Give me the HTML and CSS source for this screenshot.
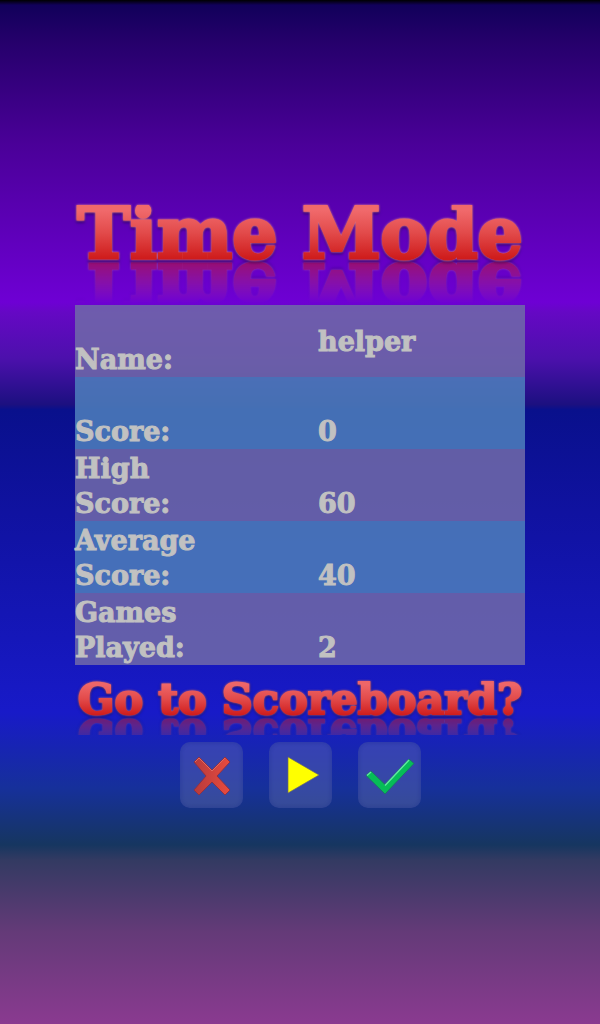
FILE: index.html
```html
<!DOCTYPE html>
<html lang="en">
<head>
  <meta charset="UTF-8" />
  <meta name="viewport" content="width=device-width, initial-scale=1" />
  <title>Time Mode</title>
  <link rel="stylesheet" href="styles.css">
</head>
<body>
  <main class="results">
    <h1 class="title">Time Mode</h1>

    <table class="stats">
      <tr>
        <th scope="row">Name:</th>
        <td class="player">helper</td>
      </tr>
      <tr>
        <th scope="row">Score:</th>
        <td>0</td>
      </tr>
      <tr>
        <th scope="row">High<br>Score:</th>
        <td>60</td>
      </tr>
      <tr>
        <th scope="row">Average<br>Score:</th>
        <td>40</td>
      </tr>
      <tr>
        <th scope="row">Games<br>Played:</th>
        <td>2</td>
      </tr>
    </table>

    <h2 class="question">Go to Scoreboard?</h2>

    <div class="actions">
      <button type="button" aria-label="No">
        <svg viewBox="0 0 63 66">
          <defs>
            <linearGradient id="red" x1="0" y1="0" x2="1" y2="0">
              <stop offset="0" stop-color="#b73a3c" />
              <stop offset="1" stop-color="#e84b3e" />
            </linearGradient>
          </defs>
          <path d="M14 20 L19 15 L32 28 L45 15 L50 20 L37 34 L50 48 L45 53 L32 40 L19 53 L14 48 L26 34 Z" fill="url(#red)" stroke="#8b3248" stroke-width="1" />
          <path d="M15 20 L19 16 L32 29 L45 16" fill="none" stroke="#e06a60" stroke-width="1" />
        </svg>
      </button>
      <button type="button" aria-label="Play again">
        <svg viewBox="0 0 63 66">
          <path d="M19 15 L50 33 L19 51 Z" fill="#ffff00" stroke="#6d6c62" stroke-width="0.7" />
        </svg>
      </button>
      <button type="button" aria-label="Yes">
        <svg viewBox="0 0 63 66">
          <path d="M8 33.5 L13 29 L27 42.5 L51 17 L56 21.5 L27 52 Z" fill="#06bd58" stroke="#1c7468" stroke-width="1" />
          <path d="M9 33.5 L13 30 M27 43.5 L51 18" fill="none" stroke="#5fe5a0" stroke-width="1.5" />
        </svg>
      </button>
    </div>
  </main>
</body>
</html>
```

FILE: styles.css
```css
:root {
  --row-purple: rgba(111, 105, 169, 0.87);
  --row-blue: rgba(77, 125, 187, 0.87);
  --text: #c1c1c1;
}

body {
  margin: 0;
  min-height: 100vh;
  font-family: 'Cooper Black', 'DejaVu Serif', serif;
  font-weight: 700;
  color: var(--text);
  background: linear-gradient(
    #000 0%,
    #11005a 0.5%,
    #25006b 4%,
    #4a0098 14%,
    #6e00d4 29.5%,
    #6508c4 30.5%,
    #4c10ac 35%,
    #1c1080 39.5%,
    #09108c 40%,
    #1012a0 50%,
    #181ac8 69.5%,
    #16309a 77%,
    #163660 82.5%,
    #333a62 84%,
    #643a78 91%,
    #8a3a90 100%
  );
}

.results {
  width: 75%;
  margin: 0 auto;
  padding: 205px 0 40px;
}

/* Glossy red headings with a mirror image below.
   The stroke is transparent so the gradient fills the fattened letters. */
.title,
.question {
  font-family: Ravie, 'DejaVu Serif', serif;
  text-align: center;
  white-space: nowrap;
  color: transparent;
  -webkit-background-clip: text;
  background-clip: text;
}

.title {
  margin: 0 0 44px;
  font-size: 71px;
  line-height: 56px;
  background-image: linear-gradient(#f0696b 10%, #e24a4a 50%, #cf1c1c 95%);
  -webkit-text-stroke: 3px transparent;
  filter: drop-shadow(0 0 1px #f08a90) drop-shadow(0 2px 1px rgba(30, 0, 80, 0.6));
  -webkit-box-reflect: below 0 linear-gradient(transparent 24%, rgba(0, 0, 0, 0.5));
}

.question {
  margin: 16px 0 25px;
  font-size: 43px;
  line-height: 36px;
  background-image: linear-gradient(#ee6668 10%, #e24a4a 50%, #cf1c1c 95%);
  -webkit-text-stroke: 2px transparent;
  filter: drop-shadow(0 0 1px #d87088) drop-shadow(0 1px 1px rgba(0, 0, 60, 0.7));
  -webkit-box-reflect: below 0 linear-gradient(transparent 50%, rgba(0, 0, 0, 0.2) 50%, rgba(0, 0, 0, 0.5));
}

.stats {
  width: 100%;
  table-layout: fixed;
  border-collapse: collapse;
  font-size: 27px;
  line-height: 35px;
  -webkit-text-stroke: 1px var(--text);
}

.stats tr {
  height: 72px;
  background: var(--row-purple);
}

.stats tr:nth-child(even) {
  background: var(--row-blue);
}

.stats th,
.stats td {
  padding: 0;
  text-align: left;
  vertical-align: bottom;
}

.stats th {
  width: 54%;
}

.stats .player {
  vertical-align: middle;
}

.actions {
  display: flex;
  justify-content: center;
  gap: 26px;
}

.actions button {
  width: 63px;
  height: 66px;
  padding: 0;
  border: none;
  border-radius: 10px;
  background: rgba(110, 118, 180, 0.36);
  box-shadow: inset 0 0 3px 2px rgba(20, 40, 140, 0.2);
  cursor: pointer;
}

.actions svg {
  display: block;
  width: 100%;
  height: 100%;
}
```
